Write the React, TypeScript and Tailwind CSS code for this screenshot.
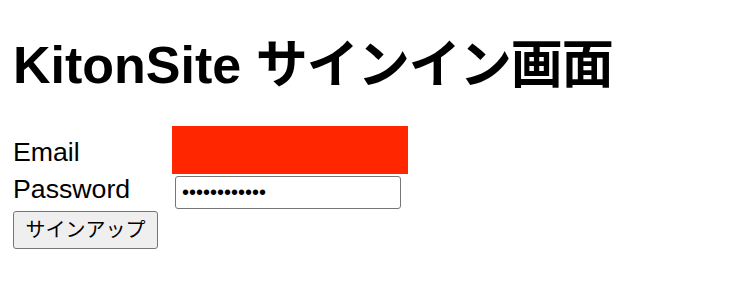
import React from 'react';

const font = { fontFamily: '"Liberation Sans", "Noto Sans CJK JP", sans-serif' };

export default function App() {
  return (
    <div className="min-h-[296px] bg-white px-[13px] text-black" style={font}>
      <h1 className="pt-[35px] text-[52px] font-bold leading-[60px] whitespace-nowrap">
        KitonSite <span className="tracking-[-1px]">サインイン画面</span>
      </h1>
      <form className="mt-[31px] flex flex-col" onSubmit={(e) => e.preventDefault()}>
        <div className="flex items-start">
          <label className="mt-[11px] w-[159px] text-[26.7px] leading-[31px]">Email</label>
          <div className="h-[48px] w-[236px] bg-[#ff2600]" />
        </div>
        <div className="flex items-start">
          <label className="w-[159px] text-[26.7px] leading-[31px]">Password</label>
          <input
            type="password"
            readOnly
            value="kitonsite123"
            className="mt-[2px] ml-[3px] h-[33px] w-[226px] rounded-[3px] border-[1.5px] border-[#767676] bg-white px-[6px] text-[20px] outline-none"
          />
        </div>
        <div className="mt-[2px]">
          <button
            type="submit"
            className="h-[38px] w-[145px] rounded-[3px] border-[1.5px] border-[#767676] bg-[#efefef] text-[20px] leading-none text-black"
          >
            サインアップ
          </button>
        </div>
      </form>
    </div>
  );
}
